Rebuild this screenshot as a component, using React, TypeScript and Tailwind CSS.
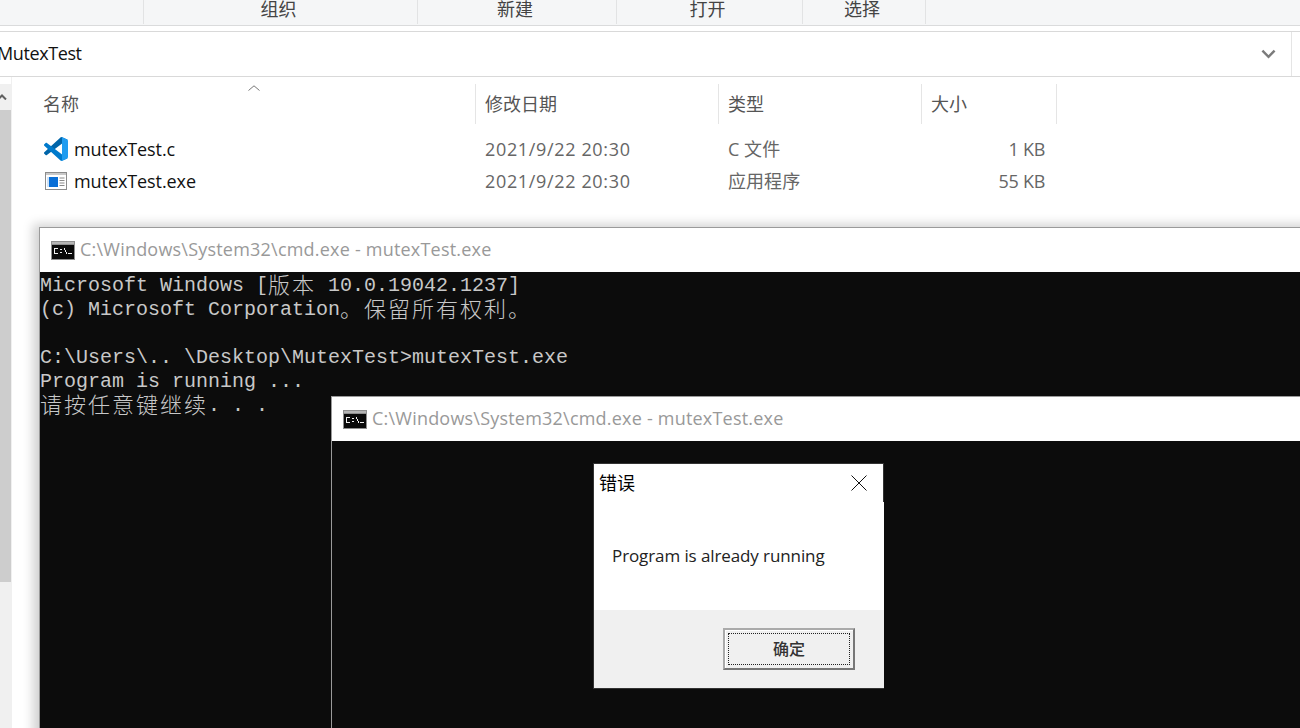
import React from 'react';

const uiFont = "[font-family:'Open_Sans','Noto_Sans_CJK_SC',sans-serif]";

const ribbon = [
  { label: '组织', w: 'w-[274px]' },
  { label: '新建', w: 'w-[199px]' },
  { label: '打开', w: 'w-[186px]' },
  { label: '选择', w: 'w-[124px]' },
];

const columns = [
  { label: '名称', w: 'w-[464px]', pl: 'pl-[31px]' },
  { label: '修改日期', w: 'w-[243px]', pl: 'pl-[9px]' },
  { label: '类型', w: 'w-[203px]', pl: 'pl-[9px]' },
  { label: '大小', w: 'w-[135px]', pl: 'pl-[9px]' },
];

const VsCodeIcon = () => (
  <svg viewBox="0 0 100 100" className="w-[24px] h-[24px] shrink-0">
    <path fill="#0065A9" d="M96.46 10.8 75.86.88C73.47-.27 70.62.21 68.75 2.08L1.3 63.58c-1.81 1.66-1.81 4.51 0 6.16l5.51 5.01c1.49 1.35 3.72 1.45 5.32.24L93.36 13.37C96.09 11.3 100 13.25 100 16.67v-.24c0-2.4-1.38-4.59-3.54-5.63Z" />
    <path fill="#007ACC" d="M96.46 89.2 75.86 99.12c-2.39 1.15-5.24.67-7.11-1.2L1.3 36.42c-1.81-1.66-1.81-4.51 0-6.16l5.51-5.01c1.49-1.35 3.72-1.45 5.32-.24l81.23 61.62c2.73 2.07 6.64.12 6.64-3.3v.24c0 2.4-1.38 4.59-3.54 5.63Z" />
    <path fill="#1F9CF0" d="M75.86 99.13c-2.39 1.15-5.24.66-7.11-1.21 2.31 2.31 6.25.67 6.25-2.59V4.67c0-3.26-3.94-4.89-6.25-2.59C70.62.21 73.47-.27 75.86.87l20.6 9.91c2.16 1.04 3.54 3.23 3.54 5.63v67.17c0 2.4-1.38 4.59-3.54 5.63l-20.6 9.92Z" />
  </svg>
);

const ExeIcon = () => (
  <svg viewBox="0 0 22 18" className="w-[22px] h-[18px] shrink-0">
    <rect x="0.5" y="0.5" width="21" height="17" fill="#fff" stroke="#8c8c8c" />
    <rect x="1" y="1" width="20" height="2" fill="#c9c9c9" />
    <rect x="4" y="5" width="9" height="10" fill="#0a6fd6" />
    <rect x="2" y="5" width="2" height="10" fill="#cfe3f7" />
    <path d="M14.5 6h5M14.5 8.5h5M14.5 11h5M14.5 13.5h5" stroke="#8a8a8a" strokeWidth="1" />
  </svg>
);

const CmdIcon = () => (
  <svg viewBox="0 0 24 19" className="w-[24px] h-[19px] shrink-0">
    <rect width="24" height="19" fill="#8f8f8f" />
    <rect x="1" y="1" width="22" height="2" fill="#b5b5b5" />
    <rect x="1" y="4" width="22" height="14" fill="#0a0a0a" />
    <path d="M3 7h4v1H4v4h3v1H3zM9 8h2v1H9zM9 11h2v1H9zM13 7h1v2h1v2h1v2h-1v-2h-1V9h-1zM17 12h4v1h-4z" fill="#f2f2f2" />
  </svg>
);

const FileRow = ({ icon, name, kind, size, iconClass }: { icon: React.ReactNode; name: string; kind: string; size: string; iconClass: string }) => (
  <div className="flex items-center h-[32px] text-[18px]">
    <div className={`w-[464px] flex items-center ${iconClass}`}>
      {icon}
      <span className="text-[#111] tracking-[-0.08px]">{name}</span>
    </div>
    <div className="w-[243px] pl-[9px] text-[#666] tracking-[0.65px]">2021/9/22 20:30</div>
    <div className="w-[203px] pl-[9px] text-[#666] tracking-[0.05px]">{kind}</div>
    <div className="w-[123px] text-right text-[#666] tracking-[-0.3px]">{size}</div>
  </div>
);

// console output: latin runs in a 12px cell font, CJK runs stretched to 24px cells
const ConsoleLine = ({ text }: { text: string }) => {
  const runs = text.match(/[\u2e80-\uffff]+|[^\u2e80-\uffff]+/g) ?? [];
  return (
    <div className="h-[24px] flex text-[#c8c8c8] leading-[24px] whitespace-pre">
      {runs.map((run, i) =>
        run.charCodeAt(0) >= 0x2e80 ? (
          <span key={i} className="text-[22px] leading-[18px] tracking-[2px] font-light [font-family:'Noto_Sans_CJK_SC',sans-serif]">{run}</span>
        ) : (
          <span key={i} className="text-[20px] [font-family:'Liberation_Mono',monospace]">{run}</span>
        )
      )}
    </div>
  );
};

const CmdWindow = ({ className, children }: { className: string; children?: React.ReactNode }) => (
  <div className={`absolute bg-[#0c0c0c] border border-[#9a9a9a] ${className}`}>
    <div className={`h-[44px] bg-white flex items-center gap-[5px] pl-[11px] text-[18px] text-[#999] tracking-[0.21px] ${uiFont}`}>
      <CmdIcon />
      <span className="pb-[2px]">C:\Windows\System32\cmd.exe - mutexTest.exe</span>
    </div>
    {children}
  </div>
);

export default function App() {
  return (
    <div className={`relative w-[1300px] h-[728px] overflow-hidden bg-white ${uiFont}`}>
      {/* ribbon */}
      <div className="h-[26px] bg-[#f5f6f7] border-b border-[#dadbdc] flex pl-[143px] text-[18px] text-[#444] leading-[19px]">
        {ribbon.map((r) => (
          <div key={r.label} className={`${r.w} h-[24px] pr-[4px] border-l border-[#e2e3e4] last:border-r text-center`}>{r.label}</div>
        ))}
      </div>

      {/* address bar */}
      <div className="mt-[5px] h-[46px] border-y border-[#d9d9d9] flex items-center">
        <span className="-ml-[3px] mr-auto pb-[2px] text-[18px] text-[#111] tracking-[-0.4px]">MutexTest</span>
        <svg viewBox="0 0 16 10" className="w-[15px] h-[10px] mr-[15px]" fill="none" stroke="#7b7b7b" strokeWidth="2.6">
          <path d="M1.5 1.5 8 8l6.5-6.5" />
        </svg>
        <div className="w-[9px] h-full border-l border-[#e5e5e5]"></div>
      </div>

      <div className="flex">
        {/* scrollbar */}
        <div className="mt-[7px] w-[11px] h-[644px] bg-[#f0f0f0] flex flex-col shrink-0">
          <div className="h-[26px] flex items-center justify-center -translate-x-[4px]">
            <svg viewBox="0 0 10 6" className="w-[10px] h-[6px]" fill="none" stroke="#606060" strokeWidth="2">
              <path d="M1 5.5 5 1.5l4 4" />
            </svg>
          </div>
          <div className="h-[472px] bg-[#cdcdcd]"></div>
        </div>

        <div className="border-l border-[#f0f0f0] flex-1">
          {/* column headers */}
          <div className="relative mt-[7px] h-[40px] flex text-[18px] text-[#555] leading-[40px]">
            <svg viewBox="0 0 12 6" className="absolute left-[236px] top-[1px] w-[12px] h-[6px]" fill="none" stroke="#777" strokeWidth="1">
              <path d="M.5 5.5 6 .8l5.5 4.7" />
            </svg>
            {columns.map((c) => (
              <div key={c.label} className={`${c.w} ${c.pl} h-[40px] border-r border-[#e5e5e5] shrink-0`}>{c.label}</div>
            ))}
          </div>
          {/* files */}
          <div className="mt-[9px]">
            <FileRow iconClass="pl-[32px] gap-[6px]" icon={<VsCodeIcon />} name="mutexTest.c" kind="C 文件" size="1 KB" />
            <FileRow iconClass="pl-[33px] gap-[7px]" icon={<ExeIcon />} name="mutexTest.exe" kind="应用程序" size="55 KB" />
          </div>
        </div>
      </div>

      {/* console windows */}
      <CmdWindow className="left-[39px] top-[227px] w-[1300px] h-[540px] shadow-[-6px_-3px_10px_rgba(0,0,0,0.18)]">
        <div className="pt-[2px]">
          <ConsoleLine text="Microsoft Windows [版本 10.0.19042.1237]" />
          <ConsoleLine text="(c) Microsoft Corporation。保留所有权利。" />
          <ConsoleLine text=" " />
          <ConsoleLine text="C:\Users\.. \Desktop\MutexTest>mutexTest.exe" />
          <ConsoleLine text="Program is running ..." />
          <ConsoleLine text="请按任意键继续. . ." />
        </div>
      </CmdWindow>
      <CmdWindow className="left-[331px] top-[396px] w-[1000px] h-[360px]" />

      {/* message box */}
      <div className="absolute left-[593px] top-[463px] w-[291px]">
        <div className="w-[291px] h-[39px] bg-white border-t border-x border-[#333] flex items-center justify-between pl-[5px] pr-[16px] text-[18px] text-black">
          <span>错误</span>
          <svg viewBox="0 0 16 16" className="w-[16px] h-[16px]" fill="none" stroke="#111" strokeWidth="1">
            <path d="M.5.5l15 15M15.5.5l-15 15" />
          </svg>
        </div>
        <div className="w-[291px] border-l border-b border-[#333]">
          <div className="h-[108px] bg-white pl-[18px] pt-[42px] text-[17px] leading-[24px] text-[#222] tracking-[-0.1px]">Program is already running</div>
          <div className="h-[78px] bg-[#f0f0f0] pt-[18px] pl-[129px]">
            <div className="w-[132px] h-[42px] bg-[#f0f0f0] border-2 border-t-[#aaa] border-l-[#aaa] border-r-[#777] border-b-[#777] p-[3px] shadow-[inset_1px_1px_0_#fff]">
              <div className="h-full border border-dotted border-[#222] flex items-center justify-center text-[16px] font-medium text-[#333]">确定</div>
            </div>
          </div>
        </div>
      </div>
    </div>
  );
}
